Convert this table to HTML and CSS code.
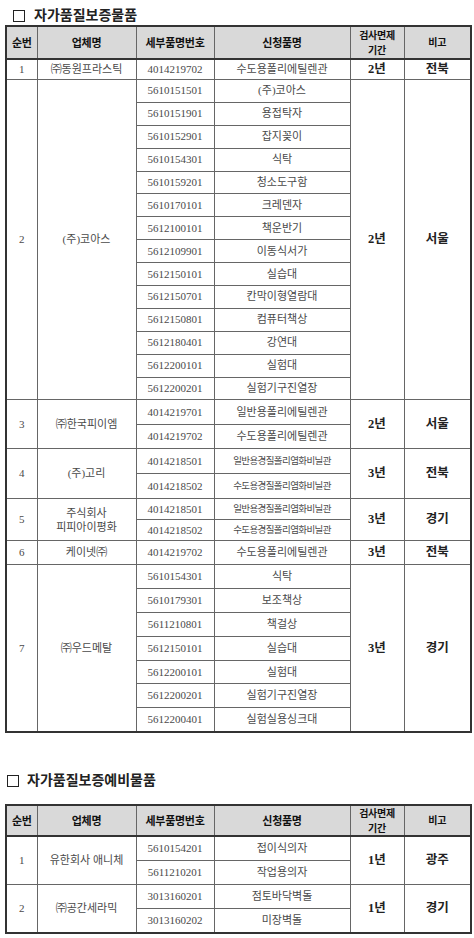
FILE: index.html
```html
<!DOCTYPE html>
<html lang="ko">
<head>
<meta charset="utf-8">
<link rel="stylesheet" href="styles.css">
</head>
<body>
<div class="page">
  <h2 class="title title-a"><span class="box"></span><span>자가품질보증물품</span></h2>
  <table class="grid grid-a">
    <colgroup>
      <col class="c1"><col class="c2"><col class="c3"><col class="c4"><col class="c5"><col class="c6">
    </colgroup>
    <thead>
      <tr><th>순번</th><th>업체명</th><th>세부품명번호</th><th>신청품명</th><th class="small">검사면제<br>기간</th><th class="small">비고</th></tr>
    </thead>
    <tbody>
      <tr class="r1"><td>1</td><td>㈜동원프라스틱</td><td>4014219702</td><td>수도용폴리에틸렌관</td><td class="b">2년</td><td class="b">전북</td></tr>

      <tr class="r2"><td rowspan="14">2</td><td rowspan="14">(주)코아스</td><td>5610151501</td><td>(주)코아스</td><td rowspan="14" class="b">2년</td><td rowspan="14" class="b">서울</td></tr>
      <tr class="r2"><td>5610151901</td><td>용접탁자</td></tr>
      <tr class="r2"><td>5610152901</td><td>잡지꽂이</td></tr>
      <tr class="r2"><td>5610154301</td><td>식탁</td></tr>
      <tr class="r2"><td>5610159201</td><td>청소도구함</td></tr>
      <tr class="r2"><td>5610170101</td><td>크레덴자</td></tr>
      <tr class="r2"><td>5612100101</td><td>책운반기</td></tr>
      <tr class="r2"><td>5612109901</td><td>이동식서가</td></tr>
      <tr class="r2"><td>5612150101</td><td>실습대</td></tr>
      <tr class="r2"><td>5612150701</td><td>칸막이형열람대</td></tr>
      <tr class="r2"><td>5612150801</td><td>컴퓨터책상</td></tr>
      <tr class="r2"><td>5612180401</td><td>강연대</td></tr>
      <tr class="r2"><td>5612200101</td><td>실험대</td></tr>
      <tr class="r2"><td>5612200201</td><td>실험기구진열장</td></tr>

      <tr class="r3"><td rowspan="2">3</td><td rowspan="2">㈜한국피이엠</td><td>4014219701</td><td>일반용폴리에틸렌관</td><td rowspan="2" class="b">2년</td><td rowspan="2" class="b">서울</td></tr>
      <tr class="r3"><td>4014219702</td><td>수도용폴리에틸렌관</td></tr>

      <tr class="r4"><td rowspan="2">4</td><td rowspan="2">(주)고리</td><td>4014218501</td><td class="tight">일반용경질폴리염화비닐관</td><td rowspan="2" class="b">3년</td><td rowspan="2" class="b">전북</td></tr>
      <tr class="r4"><td>4014218502</td><td class="tight">수도용경질폴리염화비닐관</td></tr>

      <tr class="r5"><td rowspan="2">5</td><td rowspan="2" class="two">주식회사<br>피피아이평화</td><td>4014218501</td><td class="tight">일반용경질폴리염화비닐관</td><td rowspan="2" class="b">3년</td><td rowspan="2" class="b">경기</td></tr>
      <tr class="r5"><td>4014218502</td><td class="tight">수도용경질폴리염화비닐관</td></tr>

      <tr class="r6"><td>6</td><td>케이넷㈜</td><td>4014219702</td><td>수도용폴리에틸렌관</td><td class="b">3년</td><td class="b">전북</td></tr>

      <tr class="r7"><td rowspan="7">7</td><td rowspan="7">㈜우드메탈</td><td>5610154301</td><td>식탁</td><td rowspan="7" class="b">3년</td><td rowspan="7" class="b">경기</td></tr>
      <tr class="r7"><td>5610179301</td><td>보조책상</td></tr>
      <tr class="r7"><td>5611210801</td><td>책걸상</td></tr>
      <tr class="r7"><td>5612150101</td><td>실습대</td></tr>
      <tr class="r7"><td>5612200101</td><td>실험대</td></tr>
      <tr class="r7"><td>5612200201</td><td>실험기구진열장</td></tr>
      <tr class="r7"><td>5612200401</td><td>실험실용싱크대</td></tr>
    </tbody>
  </table>

  <h2 class="title title-b"><span class="box"></span><span>자가품질보증예비물품</span></h2>
  <table class="grid grid-b">
    <colgroup>
      <col class="c1"><col class="c2"><col class="c3"><col class="c4"><col class="c5"><col class="c6">
    </colgroup>
    <thead>
      <tr><th>순번</th><th>업체명</th><th>세부품명번호</th><th>신청품명</th><th class="small">검사면제<br>기간</th><th class="small">비고</th></tr>
    </thead>
    <tbody>
      <tr><td rowspan="2">1</td><td rowspan="2">유한회사 애니체</td><td>5610154201</td><td>접이식의자</td><td rowspan="2" class="b">1년</td><td rowspan="2" class="b">광주</td></tr>
      <tr><td>5611210201</td><td>작업용의자</td></tr>
      <tr><td rowspan="2">2</td><td rowspan="2">㈜공간세라믹</td><td>3013160201</td><td>점토바닥벽돌</td><td rowspan="2" class="b">1년</td><td rowspan="2" class="b">경기</td></tr>
      <tr><td>3013160202</td><td>미장벽돌</td></tr>
    </tbody>
  </table>
</div>
</body>
</html>
```
FILE: styles.css
```css
html, body {
  margin: 0;
  padding: 0;
  background: #ffffff;
}

.page {
  width: 474px;
  font-family: "Liberation Serif", "Noto Sans CJK KR", serif;
  color: #444;
}

.title {
  display: flex;
  align-items: center;
  gap: 9px;
  margin: 0;
  font-family: "Noto Sans CJK KR", sans-serif;
  font-size: 14px;
  font-weight: 700;
  color: #222;
  line-height: 18px;
}

.title .box {
  width: 10px;
  height: 10px;
  border: 1.5px solid #222;
  flex: none;
  margin-top: 4px;
}

.title-a {
  padding: 2px 0 0 13px;
  height: 23px;
}

.title-b {
  margin-top: 21px;
  padding-left: 7px;
  height: 50px;
  gap: 8px;
}

.grid {
  margin-left: 5px;
  width: 465px;
  border-collapse: collapse;
  table-layout: fixed;
  border: 2px solid #333;
}

.c1 { width: 31px; }
.c2 { width: 99px; }
.c3 { width: 78px; }
.c4 { width: 136px; }
.c5 { width: 54px; }
.c6 { width: 67px; }

.grid th,
.grid td {
  border: 1px solid #666;
  padding: 0;
  text-align: center;
  vertical-align: middle;
  font-size: 11px;
  line-height: 13px;
}

.grid th {
  background: #d9d9d9;
  height: 31px;
  color: #111;
  font-family: "Noto Sans CJK KR", sans-serif;
  font-weight: 700;
  border-bottom: 2px solid #333;
  letter-spacing: -0.3px;
}

.grid th.small {
  font-size: 10px;
  line-height: 14.5px;
}

.grid-b th {
  height: 27px;
}

.grid td {
  color: #4a4a4a;
}

.r1 td { height: 19px; }
.r2 td { height: 21.9px; }
.r3 td { height: 23.5px; }
.r4 td { height: 24px; }
.r5 td { height: 20px; }
.r6 td { height: 23px; }
.r7 td { height: 22.8px; }

.grid td.two {
  line-height: 14px;
}

.grid-b td {
  height: 23px;
}

.grid td.tight {
  font-size: 9.5px;
  letter-spacing: -0.6px;
}

.grid td.b {
  font-weight: 700;
  font-size: 12.5px;
  color: #222;
}
```
